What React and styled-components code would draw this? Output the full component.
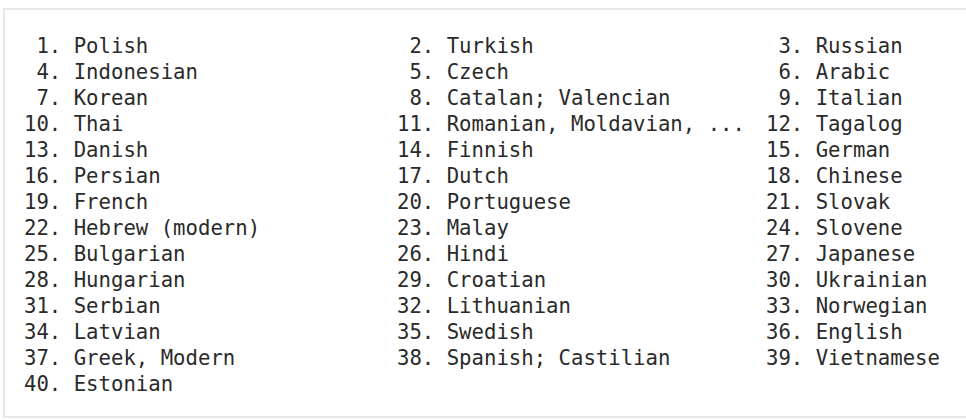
import React from "react";
import styled, { createGlobalStyle } from "styled-components";

const GlobalStyle = createGlobalStyle`
  html, body {
    margin: 0;
    padding: 0;
    background: #fff;
    overflow: hidden;
  }
`;

const OutputBox = styled.div`
  margin: 8px 0 0 3px;
  width: 963px;
  height: 410px;
  box-sizing: border-box;
  border: 2px solid #e8e8e8;
  border-right: none;
  padding: 23px 0 0 19px;
  background: #fff;
`;

const Columns = styled.div`
  display: grid;
  grid-template-columns: 373px 369px 1fr;
  font-family: "DejaVu Sans Mono", "Liberation Mono", monospace;
  font-size: 20.65px;
  line-height: 26px;
  color: #2a2a2a;
  white-space: pre;
`;

const Item = styled.div`
  display: flex;
`;

const Num = styled.span`
  width: 3ch;
  margin-right: 1ch;
  text-align: right;
`;

const languages = [
  "Polish", "Turkish", "Russian",
  "Indonesian", "Czech", "Arabic",
  "Korean", "Catalan; Valencian", "Italian",
  "Thai", "Romanian, Moldavian, ...", "Tagalog",
  "Danish", "Finnish", "German",
  "Persian", "Dutch", "Chinese",
  "French", "Portuguese", "Slovak",
  "Hebrew (modern)", "Malay", "Slovene",
  "Bulgarian", "Hindi", "Japanese",
  "Hungarian", "Croatian", "Ukrainian",
  "Serbian", "Lithuanian", "Norwegian",
  "Latvian", "Swedish", "English",
  "Greek, Modern", "Spanish; Castilian", "Vietnamese",
  "Estonian",
];

const App = () => (
  <>
    <GlobalStyle />
    <OutputBox>
      <Columns>
        {languages.map((name, index) => (
          <Item key={index}>
            <Num>{index + 1}.</Num>
            <span>{name}</span>
          </Item>
        ))}
      </Columns>
    </OutputBox>
  </>
);

export default App;
